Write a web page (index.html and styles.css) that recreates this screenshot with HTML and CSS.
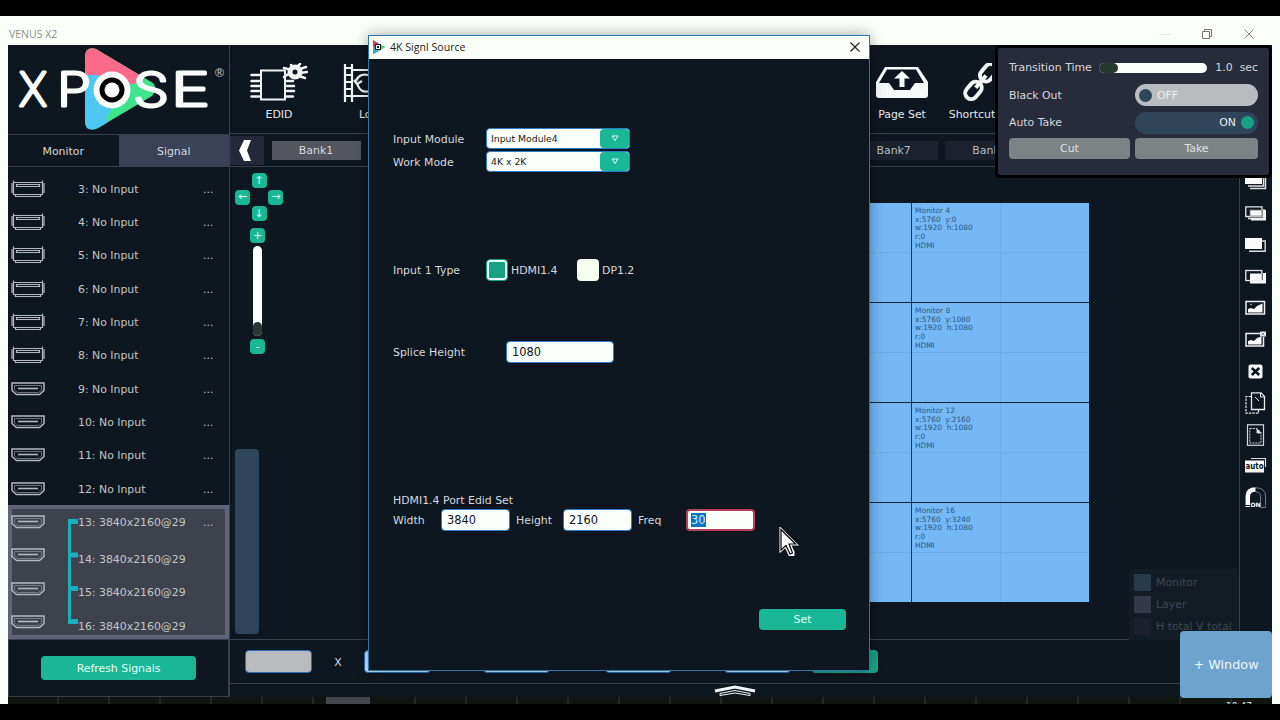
FILE: index.html
```html
<!DOCTYPE html>
<html lang="en">
<head>
  <meta charset="UTF-8">
  <meta name="viewport" content="width=device-width, initial-scale=1.0">
  <title>VENUS X2</title>
  <link rel="stylesheet" href="styles.css">
</head>
<body>
  <!-- Shared icons -->
  <svg class="defs" width="0" height="0">
    <symbol id="dvi" viewBox="0 0 34 18">
      <g fill="none" stroke="#b4b8c0" stroke-width="1.200">
        <path d="M2.500 .5V14.500H31.500V.5M2.500 2.500H31.500M5.500 4.500H28.500V6.500H5.500ZM4.500 14.500V16.500H29.500V14.500M1 3V13M33 3V13"/>
      </g>
    </symbol>
    <symbol id="hdmi" viewBox="0 0 34 14">
      <path d="M1 1H33V8.500L28.500 12.500H5.500L1 8.500Z" fill="none" stroke="#b4b8c0" stroke-width="1.500"/>
      <path d="M3.500 3.500H30.500V8L27.500 10.500H6.500L3.500 8Z" fill="none" stroke="#858a94" stroke-width=".8"/>
      <path d="M7 6.500H27" stroke="#b4b8c0" stroke-width="1.600"/>
    </symbol>
  </svg>

  <div class="screen">
    <div class="titlebar">
      <span class="app-name">VENUS X2</span>
      <div class="win-buttons">
        <svg width="12" height="12"><path d="M0 6.500H12" stroke="#e3e6e3"/></svg>
        <svg width="12" height="12" fill="none" stroke="#777"><path d="M1.500 3.500H8.500V10.500H1.500ZM3.500 3.500V1.500H10.500V8.500H8.500"/></svg>
        <svg width="12" height="12" stroke="#888"><path d="M1.500 1.500L10.500 10.500M10.500 1.500L1.500 10.500"/></svg>
      </div>
    </div>

    <div class="app">
      <!-- Left column -->
      <div class="sidebar">
        <div class="logo">
          <svg width="221" height="88" viewBox="8 46 221 88">
            <defs>
              <clipPath id="tri"><path d="M85 56Q86 46 96 49L153 83Q158 89 152 96L98 128Q86 133 85 122Z"/></clipPath>
            </defs>
            <g clip-path="url(#tri)">
              <rect x="80" y="44" width="80" height="90" fill="#3fe58c"/>
              <path d="M80 40H165L140 82L112 89L84 75H80Z" fill="#fc6a8b"/>
              <path d="M80 75H98L112 90V108L106 118L112 134H80Z" fill="#4cc8f3"/>
            </g>
            <g class="wordmark">
              <text x="19" y="105.500" textLength="28" lengthAdjust="spacingAndGlyphs">X</text>
              <text x="57" y="105.500" textLength="34" lengthAdjust="spacingAndGlyphs">P</text>
              <text x="133" y="105.500" textLength="36" lengthAdjust="spacingAndGlyphs">S</text>
              <text x="171" y="105.500" textLength="39" lengthAdjust="spacingAndGlyphs">E</text>
            </g>
            <circle cx="112" cy="90" r="18.500" fill="#fafcfa"/>
            <circle cx="112" cy="90" r="10" fill="none" stroke="#000" stroke-width="5"/>
            <text class="reg" x="213.500" y="77">®</text>
          </svg>
        </div>
        <div class="tabs">
          <div class="tab">Monitor</div>
          <div class="tab active">Signal</div>
        </div>
        <div class="signals">
          <div class="signal"><svg class="port dvi"><use href="#dvi"/></svg><span>3: No Input</span><b>...</b></div>
          <div class="signal"><svg class="port dvi"><use href="#dvi"/></svg><span>4: No Input</span><b>...</b></div>
          <div class="signal"><svg class="port dvi"><use href="#dvi"/></svg><span>5: No Input</span><b>...</b></div>
          <div class="signal"><svg class="port dvi"><use href="#dvi"/></svg><span>6: No Input</span><b>...</b></div>
          <div class="signal"><svg class="port dvi"><use href="#dvi"/></svg><span>7: No Input</span><b>...</b></div>
          <div class="signal"><svg class="port dvi"><use href="#dvi"/></svg><span>8: No Input</span><b>...</b></div>
          <div class="signal"><svg class="port"><use href="#hdmi"/></svg><span>9: No Input</span><b>...</b></div>
          <div class="signal"><svg class="port"><use href="#hdmi"/></svg><span>10: No Input</span><b>...</b></div>
          <div class="signal"><svg class="port"><use href="#hdmi"/></svg><span>11: No Input</span><b>...</b></div>
          <div class="signal"><svg class="port"><use href="#hdmi"/></svg><span>12: No Input</span><b>...</b></div>
        </div>
        <div class="group">
          <div class="group-ports">
            <svg class="port"><use href="#hdmi"/></svg>
            <svg class="port"><use href="#hdmi"/></svg>
            <svg class="port"><use href="#hdmi"/></svg>
            <svg class="port"><use href="#hdmi"/></svg>
          </div>
          <svg class="bracket" width="10" height="106" fill="#18b0c0"><path d="M0 0H10V5H3V33.500H10V38.500H3V67H10V72H3V100H10V105H0Z"/></svg>
          <div class="group-names">
            <span>13: 3840x2160@29</span>
            <span>14: 3840x2160@29</span>
            <span>15: 3840x2160@29</span>
            <span>16: 3840x2160@29</span>
          </div>
          <b>...</b>
        </div>
        <div class="refresh"><button class="green">Refresh Signals</button></div>
      </div>

      <!-- Main column -->
      <div class="main">
        <div class="toolbar">
          <div class="tool edid">
            <svg width="58" height="40" viewBox="0 0 58 40">
              <g fill="none" stroke="#f2f4f4" stroke-width="2.500" stroke-linecap="round">
                <rect x="11" y="7.500" width="24" height="29" stroke-width="2"/>
                <path d="M1.500 12H9M1.500 18H9M1.500 23H9M1.500 28H9M1.500 33.500H9M37 18H43M37 23H44M37 28H44M37 33.500H43"/>
                <circle cx="45" cy="9" r="5" stroke-width="5"/>
                <path d="M34 5L41 7M34 14L40 10M50 6L56 4M50 10L57 9M49 13L55 15M42 3L41 2M48 3L50 1" stroke-width="2.500"/>
              </g>
            </svg>
            <span>EDID</span>
          </div>
          <div class="tool load">
            <svg width="58" height="40" viewBox="0 0 58 40" fill="none" stroke="#f2f4f4" stroke-width="2.200">
              <path d="M2 1V39M9 1V39M2 5H9M2 12H9M2 19H9M2 26H9M2 33H9M9 7H48M9 33H48M13 18Q16 10 25 12M14 20Q17 31 27 28M11 17L14 21L19 18"/>
            </svg>
            <span>Load</span>
          </div>
          <div class="tool page-set">
            <svg width="54" height="40" viewBox="0 0 54 40">
              <path d="M10 4H43L53 19V32Q53 35 50 35H4Q1 35 1 32V19Z" fill="#f8faf9"/>
              <path d="M12 6.500H41L49 20H40L35 27H19L14 20H4Z" fill="#0e1620"/>
              <path d="M27 8L35 15.500H29.500V24H24.500V15.500H19Z" fill="#f8faf9"/>
            </svg>
            <span>Page Set</span>
          </div>
          <div class="tool shortcut">
            <svg width="40" height="40" viewBox="0 0 40 40" fill="none" stroke="#f2f4f4" stroke-width="4">
              <g transform="translate(9 0) rotate(-50 20 20)">
                <rect x="0" y="13" width="19" height="12" rx="6"/>
                <rect x="23" y="13" width="19" height="12" rx="6"/>
                <path d="M13 19H29"/>
              </g>
            </svg>
            <span>Shortcut</span>
          </div>
        </div>

        <div class="banks">
          <div class="bank-prev"><svg width="12" height="21"><path d="M5 0H12L8 10.500L12 21H5L0 10.500Z" fill="#fff"/></svg></div>
          <div class="bank active">Bank1</div>
          <div class="bank bank7">Bank7</div>
          <div class="bank">Bank8</div>
        </div>

        <div class="work">
          <div class="nav">
            <div class="pad">
              <i class="key up">↑</i>
              <i class="key left">←</i>
              <i class="key right">→</i>
              <i class="key down">↓</i>
            </div>
            <div class="zoom">
              <i class="key">+</i>
              <div class="zoom-track"><div class="zoom-thumb"></div></div>
              <i class="key">-</i>
            </div>
            <div class="scroll"></div>
          </div>

          <div class="stage">
            <div class="mon"></div><div class="mon"></div><div class="mon"></div>
            <div class="mon">Monitor 4<br>x:5760&nbsp; y:0<br>w:1920&nbsp; h:1080<br>r:0<br>HDMI</div>
            <div class="mon"></div><div class="mon"></div><div class="mon"></div>
            <div class="mon">Monitor 8<br>x:5760&nbsp; y:1080<br>w:1920&nbsp; h:1080<br>r:0<br>HDMI</div>
            <div class="mon"></div><div class="mon"></div><div class="mon"></div>
            <div class="mon">Monitor 12<br>x:5760&nbsp; y:2160<br>w:1920&nbsp; h:1080<br>r:0<br>HDMI</div>
            <div class="mon"></div><div class="mon"></div><div class="mon"></div>
            <div class="mon">Monitor 16<br>x:5760&nbsp; y:3240<br>w:1920&nbsp; h:1080<br>r:0<br>HDMI</div>
          </div>

          <div class="tools">
            <!-- bring to front -->
            <svg viewBox="0 0 22 22"><path d="M5 17.500H20.500V6M3 15H18.500V5" fill="none" stroke="#ddd" stroke-width="1.500"/><rect x="0" y="3" width="17" height="10" fill="#fafafa"/></svg>
            <!-- send to back -->
            <svg viewBox="0 0 22 22"><path d="M18 7H21V17.500H6V15H18Z" fill="#fafafa"/><path d="M.8 3.800H17V13.500H.8ZM3 15.500H19V6" fill="none" stroke="#e8e8e8" stroke-width="1.300"/><rect x="5" y="7" width="12" height="6" fill="#fafafa" stroke="#777" stroke-width=".8"/></svg>
            <!-- forward -->
            <svg viewBox="0 0 22 22"><path d="M4 17.200H20.200V7H17" fill="none" stroke="#ddd" stroke-width="1.400"/><rect x="0" y="4" width="17" height="11" fill="#fafafa"/></svg>
            <!-- backward -->
            <svg viewBox="0 0 22 22"><path d="M18 7H21V17.500H5V14H18Z" fill="#fafafa"/><rect x=".8" y="4.500" width="16" height="10" fill="none" stroke="#e8e8e8" stroke-width="1.300"/><rect x="5" y="7.500" width="11" height="6.500" fill="#fafafa"/></svg>
            <!-- picture -->
            <svg viewBox="0 0 22 22"><rect x="1" y="4.500" width="18.500" height="12.500" fill="none" stroke="#f0f0f0" stroke-width="1.500"/><path d="M3 15.500V12L6 11L9 12L12 9L17.500 6.500V15.500Z" fill="#fafafa"/><circle cx="6" cy="7.500" r=".8" fill="#ccc"/></svg>
            <!-- picture, remove -->
            <svg viewBox="0 0 22 22"><path d="M15 4.500H1V17H18.500V8" fill="none" stroke="#f0f0f0" stroke-width="1.500"/><path d="M3 15.500V12L6 11L9 12L12 9L16.500 7.500V15.500Z" fill="#fafafa"/><rect x="15" y="2.500" width="6" height="5" fill="#f0f0f0"/><path d="M16.500 3.500L19.500 6.500M19.500 3.500L16.500 6.500" stroke="#777" stroke-width=".8"/></svg>
            <!-- delete -->
            <svg viewBox="0 0 22 22"><rect x="3.500" y="3.500" width="14" height="14" rx="2" fill="#fafafa"/><path d="M6.800 7L14.200 14M14.200 7L6.800 14" stroke="#0e1620" stroke-width="2.600"/></svg>
            <!-- copy -->
            <svg viewBox="0 0 22 22" fill="none" stroke="#e8e8e8"><path d="M6.500 .8H16L19.500 4.500V17.500H6.500Z" stroke-width="1.300"/><path d="M15.500 1V5H19.500M10 5L14 9" /><path d="M6 4.500H1V21.200H13.500V18" stroke-dasharray="2.500 1" stroke-width="1.200"/></svg>
            <!-- page -->
            <svg viewBox="0 0 22 22" fill="none" stroke="#d8d8d8"><rect x="2.500" y=".8" width="16" height="20.500" stroke-width="1.200"/><path d="M4.800 4.500H12L16 8.500V19H4.800Z" stroke-dasharray="2 1"/><path d="M12 5V9H16Z" fill="#d8d8d8"/></svg>
            <!-- auto -->
            <svg viewBox="0 0 22 22"><path d="M6 3.500H20.500V12" fill="none" stroke="#ddd" stroke-width="1.200"/><rect x="0" y="5.500" width="19" height="12" fill="#fafafa"/><text x="9.500" y="14" class="auto-text" textLength="18" lengthAdjust="spacingAndGlyphs">auto</text></svg>
            <!-- magnet -->
            <svg viewBox="0 0 22 22"><path d="M2.800 20V9Q3 2.500 10.500 2.500" fill="none" stroke="#fafafa" stroke-width="4.500"/><path d="M11 .8Q20.500 1 20.500 9V20.500H15.500V9Q15.500 5 11 5" fill="none" stroke="#778" stroke-width="1"/><path d="M0 18.500H5M16 18.500H21" stroke="#222"/><text x="10.500" y="19.500" class="on-text">ON</text></svg>
          </div>
        </div>

        <div class="bottom">
          <div class="field dim"></div>
          <span class="times">X</span>
          <div class="field"></div>
          <div class="field second"></div>
          <div class="field third"></div>
          <div class="field fourth"></div>
          <div class="apply"></div>
        </div>
        <div class="drawer">
          <svg width="42" height="12" fill="none" stroke="#f4f6f6"><path d="M1 6L21 2L41 6" stroke-width="3"/><path d="M6 8.500L21 5.500L36 8.500V10.500L21 8L6 10.500Z"/></svg>
        </div>
      </div>

      <div class="taskbar"><div class="task"></div><span class="clock">10:47</span></div>

      <!-- Legend over the canvas -->
      <div class="legend">
        <div><i class="c-monitor"></i>Monitor</div>
        <div><i class="c-layer"></i>Layer</div>
        <div><i class="c-total"></i>H total V total</div>
      </div>

      <!-- Take panel -->
      <div class="panel">
        <div class="panel-row">
          <span>Transition Time</span>
          <div class="time-track"><div class="time-thumb"></div></div>
          <span>1.0</span><span class="sec">sec</span>
        </div>
        <div class="panel-row">
          <span>Black Out</span>
          <div class="toggle"><i></i>OFF</div>
        </div>
        <div class="panel-row">
          <span>Auto Take</span>
          <div class="toggle on">ON<i></i></div>
        </div>
        <div class="panel-buttons"><button>Cut</button><button>Take</button></div>
      </div>

      <div class="add-window">+ Window</div>
    </div>
  </div>

  <!-- Signal source dialog -->
  <div class="dialog">
    <div class="dialog-title">
      <svg width="14" height="16">
        <path d="M1 1L7 4.500L4 8L1 8Z" fill="#d63a68"/><path d="M1 8H5L7 12L1 15.500Z" fill="#43a5dc"/><path d="M6 4L13.500 8L6 12.500Z" fill="#4fd67c"/>
        <rect x="3.500" y="5.500" width="5" height="5" fill="#fff" stroke="#222"/><rect x="5" y="7" width="2" height="2" fill="#222"/>
      </svg>
      <span>4K Signl Source</span>
      <svg class="close" width="12" height="12" stroke="#222" stroke-width="1.200"><path d="M1.500 1.500L10.500 10.500M10.500 1.500L1.500 10.500"/></svg>
    </div>
    <div class="dialog-body">
      <div class="form-row">
        <label>Input Module</label>
        <div class="select"><span>Input Module4</span><i><svg width="8" height="7"><path d="M1 1H7L4 5.500Z" fill="none" stroke="#e6fff6"/></svg></i></div>
      </div>
      <div class="form-row">
        <label>Work Mode</label>
        <div class="select"><span>4K x 2K</span><i><svg width="8" height="7"><path d="M1 1H7L4 5.500Z" fill="none" stroke="#e6fff6"/></svg></i></div>
      </div>
      <div class="form-row type-row">
        <label>Input 1 Type</label>
        <div class="check checked"></div><span class="hdmi-label">HDMI1.4</span>
        <div class="check"></div><span>DP1.2</span>
      </div>
      <div class="form-row splice-row">
        <label>Splice Height</label>
        <div class="input wide">1080</div>
      </div>
      <div class="edid-title">HDMI1.4 Port Edid Set</div>
      <div class="form-row edid-row">
        <label>Width</label><div class="input">3840</div>
        <label>Height</label><div class="input">2160</div>
        <label class="freq">Freq</label><div class="input focus"><mark>30</mark></div>
      </div>
      <button class="green set">Set</button>
    </div>
  </div>

  <svg class="cursor" width="20" height="30"><path d="M1.500 1.500V24L6.500 19.500L10.500 28H14.500V25L11 17.500H17.500Z" fill="#fff" stroke="#fff" stroke-width="2"/><path d="M2 2.500V23L7 18.500L11 27L13.500 26L10 17H16.500Z" fill="#fff" stroke="#000" stroke-width="1.200"/></svg>
</body>
</html>
```

FILE: styles.css
```css
/* General Styles */
* {
  box-sizing: border-box;
}

body {
  font-family: 'DejaVu Sans', sans-serif;
  font-size: 10.9px;
  background-color: #000;
  color: #d6d9dc;
  margin: 0;
  width: 1280px;
  height: 720px;
  overflow: hidden;
}

i {
  font-style: normal;
}

svg {
  display: block;
  flex: none;
}

.defs {
  position: absolute;
}

button {
  font: inherit;
  border: none;
  padding: 0;
}

.green {
  background: #19b796;
  color: #e4fff7;
  border-radius: 4px;
}

.screen {
  margin-top: 16px;
  height: 688px;
  background: #fafffa;
  overflow: hidden;
}

.titlebar {
  height: 29px;
  padding: 6px 25px 0 9px;
  display: flex;
  justify-content: space-between;
  align-items: center;
}

.app-name {
  font-family: 'Open Sans', sans-serif;
  font-size: 10.5px;
  color: #8a8d8a;
}

.win-buttons {
  display: flex;
  gap: 30px;
}

.app {
  position: relative;
  margin: 0 8px;
  height: 659px;
  background: #0e1620;
  display: grid;
  grid-template-columns: 222px 1fr;
  grid-template-rows: 652px 7px;
}

/* Left column */
.sidebar {
  border-right: 1px solid #3b414c;
}

.logo {
  height: 89px;
  padding-top: 1px;
}

.wordmark text {
  font-family: Inter, sans-serif;
  font-size: 46px;
  font-weight: 200;
  fill: #fafcfa;
  stroke: #fafcfa;
  stroke-width: 3px;
  stroke-linejoin: round;
}

.reg {
  font-size: 12px;
  fill: #c0c4c8;
}

.tabs {
  display: flex;
  height: 33px;
  border-top: 1px solid #3b414c;
  border-bottom: 1px solid #3b414c;
}

.tab {
  flex: 1;
  display: flex;
  align-items: center;
  justify-content: center;
  padding-top: 1px;
}

.tab.active {
  background: #3b4258;
}

.signals {
  padding-top: 5px;
  height: 338px;
}

.signal {
  display: flex;
  align-items: center;
  height: 33.35px;
  padding-left: 3px;
  color: #c3c6c4;
}

.port {
  width: 34px;
  height: 14px;
}

.port.dvi {
  height: 18px;
}

.signal span {
  width: 125px;
  margin-left: 33px;
}

.signal span,
.signal b {
  padding-top: 1px;
}

b {
  font-weight: normal;
}

.group {
  display: flex;
  height: 134px;
  border: 4px solid #5f6478;
  background: #3e424d;
  color: #c3c6c4;
}

.group-ports {
  display: flex;
  flex-direction: column;
  gap: 19.4px;
  padding-top: 6px;
  margin-left: -1px;
}

.bracket {
  margin: 10px 0 0 23px;
}

.group-names {
  display: flex;
  flex-direction: column;
  justify-content: space-between;
  width: 125px;
  height: 125px;
  padding-top: 7px;
  line-height: 14px;
}

.group-names span {
  height: 14px;
}

.group-names span:first-child {
  margin-bottom: 3px;
}

.group b {
  margin-top: 7px;
}

.refresh {
  height: 58px;
  border: 1px solid #3b414c;
  padding: 16px 32px;
}

.refresh button {
  width: 155px;
  height: 24px;
  padding-top: 1px;
}

/* Toolbar */
.toolbar {
  display: flex;
  height: 89px;
  border-bottom: 1px solid #3b414c;
  padding-top: 18px;
}

.tool {
  display: flex;
  flex: none;
  flex-direction: column;
  align-items: center;
  gap: 5px;
  width: 60px;
  color: #e6e8ea;
}

.tool span {
  height: 14px;
  line-height: 14px;
}

.edid {
  margin-left: 19px;
}

.load {
  margin-left: 33px;
}

.page-set {
  margin-left: 470px;
}

.shortcut {
  margin-left: 10px;
}

.banks {
  display: flex;
  align-items: center;
  height: 33px;
  border-bottom: 1px solid #3b414c;
}

.bank-prev {
  display: flex;
  align-items: center;
  justify-content: center;
  width: 34px;
  height: 29px;
  padding-right: 5px;
  background: #252839;
}

.bank {
  display: flex;
  align-items: center;
  justify-content: center;
  width: 89px;
  height: 19px;
  margin-left: 7.5px;
  padding-top: 1px;
  background: #1b212d;
  color: #b9bcc0;
}

.bank.active {
  background: #53565f;
  color: #d6d9dc;
}

.bank7 {
  margin-left: 488px;
  justify-content: flex-start;
  padding-left: 28px;
}

/* Work area */
.work {
  display: flex;
  height: 472px;
}

.nav {
  width: 147px;
  padding: 6px 0 0 5px;
}

.pad {
  display: grid;
  grid-template-columns: 15px 15px 15px;
  grid-template-areas: ". up ." "left . right" ". down .";
  gap: 1.7px;
}

.key {
  display: flex;
  align-items: center;
  justify-content: center;
  width: 15px;
  height: 15px;
  border-radius: 4px;
  background: #19b796;
  color: #d9fff3;
  font-size: 11px;
  line-height: 10px;
}

.up { grid-area: up; }
.left { grid-area: left; }
.right { grid-area: right; }
.down { grid-area: down; }

.zoom {
  display: flex;
  flex-direction: column;
  align-items: center;
  width: 15px;
  margin: 7px 0 0 15px;
}

.zoom-track {
  display: flex;
  align-items: flex-end;
  width: 9px;
  height: 90px;
  margin: 3px 0;
  border-radius: 5px;
  background: #fcfffc;
}

.zoom-thumb {
  width: 9px;
  height: 14px;
  border-radius: 5px;
  background: #26382f;
}

.scroll {
  width: 24px;
  height: 185px;
  margin-top: 95px;
  border-radius: 4px;
  background: #2f4559;
}

.stage {
  display: grid;
  grid-template-columns: repeat(4, 178px);
  grid-template-rows: repeat(4, 100px);
  width: 712px;
  height: 399px;
  margin-top: 36px;
  overflow: hidden;
}

.mon {
  padding: 4px 0 0 3px;
  border-left: 1px solid #12314d;
  border-bottom: 1px solid #12202f;
  background:
    linear-gradient(#69aee8, #69aee8) 50% 0 / 1px 100% no-repeat,
    linear-gradient(#69aee8, #69aee8) 0 50% / 100% 1px no-repeat,
    #74b9f6;
  color: #2b5580;
  font-size: 7.4px;
  line-height: 8.7px;
}

.tools {
  display: flex;
  flex-direction: column;
  gap: 9.6px;
  width: 33px;
  margin-left: auto;
  padding: 4px 0 0 5px;
  border-left: 1px solid #3b414c;
}

.tools svg {
  width: 22px;
  height: 22px;
}

.auto-text {
  font: bold 8px 'DejaVu Sans', sans-serif;
  text-anchor: middle;
  fill: #0e1620;
}

.on-text {
  font: bold 6px 'DejaVu Sans', sans-serif;
  text-anchor: middle;
  fill: #fff;
}

/* Bottom bar */
.bottom {
  display: flex;
  align-items: center;
  height: 45px;
  border-top: 1px solid #3b414c;
  border-bottom: 1px solid #3b414c;
  padding-left: 15px;
}

.field {
  width: 67px;
  height: 23px;
  border: 1px solid #2a6cb8;
  border-radius: 4px;
  background: #c8e4fa;
}

.field.dim {
  background: #b8babd;
}

.times {
  width: 52px;
  padding-top: 1px;
  text-align: center;
}

.second { margin-left: 52px; }
.third { margin-left: 55px; }
.fourth { margin-left: 52px; }

.apply {
  width: 66px;
  height: 23px;
  margin-left: 21px;
  border-radius: 4px;
  background: #19a58a;
}

.drawer {
  padding: 1px 0 0 484px;
}

.taskbar {
  grid-column: 1 / 3;
  display: flex;
  overflow: hidden;
  background: repeating-linear-gradient(90deg, #10150f 0 49px, #242824 49px 51px);
}

.task {
  width: 44px;
  margin-left: 318px;
  background: #43464a;
}

.clock {
  margin: 3px 0 0 856px;
  font-size: 9px;
  line-height: 12px;
  color: #e8e8e8;
}

.legend {
  position: absolute;
  left: 1121px;
  top: 524px;
  width: 109px;
  padding: 2px 5px;
  background: #131b24;
  color: #3f4750;
}

.legend div {
  display: flex;
  align-items: center;
  height: 22.3px;
  white-space: nowrap;
}

.legend i {
  width: 17px;
  height: 17px;
  margin-right: 5px;
}

.c-monitor { background: #263c4e; }
.c-layer { background: #343848; }
.c-total { background: #1c202c; }

/* Take panel */
.panel {
  position: absolute;
  left: 987px;
  top: 0;
  width: 277px;
  height: 133px;
  padding: 6px 11px 0;
  border: 3px solid #000;
  border-radius: 5px;
  background: #282b3a;
}

.panel-row {
  display: flex;
  align-items: center;
  height: 27.6px;
}

.time-track {
  width: 108px;
  height: 10px;
  margin: 0 8px 0 auto;
  border-radius: 5px;
  background: #fcfffc;
}

.time-thumb {
  width: 19px;
  height: 10px;
  border-radius: 5px;
  background: #26382f;
}

.sec {
  margin-left: 7px;
}

.toggle {
  display: flex;
  align-items: center;
  gap: 5px;
  width: 123px;
  height: 22px;
  margin-left: auto;
  padding: 0 4px;
  border-radius: 11px;
  background: #b9bdc0;
  color: #eceeef;
}

.toggle i {
  width: 13px;
  height: 13px;
  border-radius: 50%;
  background: #2f4559;
}

.toggle.on {
  justify-content: flex-end;
  background: #2f4559;
}

.toggle.on i {
  background: #19a184;
}

.panel-buttons {
  display: grid;
  grid-template-columns: 121px 123px;
  gap: 5px;
  margin-top: 1px;
}

.panel-buttons button {
  height: 21px;
  padding-top: 1px;
  border-radius: 4px;
  background: #7d8285;
  color: #dfe2e2;
}

.add-window {
  position: absolute;
  left: 1172px;
  top: 586px;
  width: 92px;
  height: 67px;
  border-radius: 4px;
  background: #6ea3cd;
  color: #eef6fc;
  font-size: 12.8px;
  line-height: 67px;
  text-align: center;
}

/* Dialog */
.dialog {
  position: absolute;
  left: 368px;
  top: 35px;
  width: 502px;
  height: 636px;
  border: 1px solid #2b78a8;
  background: #0e1620;
  box-shadow: 0 0 14px rgba(0, 0, 0, 0.35);
}

.dialog-title {
  display: flex;
  align-items: center;
  height: 23px;
  padding: 0 8px 2px 3px;
  background: #fafffa;
  color: #222;
  font-family: 'Open Sans', sans-serif;
  font-size: 10.6px;
}

.dialog-title span {
  margin-left: 4px;
}

.close {
  margin-left: auto;
}

.dialog-body {
  padding: 68px 23px 0 24px;
}

.form-row {
  display: flex;
  align-items: center;
  height: 23px;
}

.form-row label {
  width: 93px;
  padding-top: 1px;
}

.select {
  display: flex;
  width: 144px;
  height: 21px;
  border: 1px solid #2a7cc8;
  border-radius: 4px;
  background: #fafffa;
  color: #222;
  font-size: 9.3px;
  line-height: 20px;
}

.select span {
  flex: 1;
  padding-left: 4px;
}

.select i {
  display: flex;
  align-items: center;
  justify-content: center;
  width: 29px;
  border-radius: 4px;
  background: #19b796;
}

.type-row {
  margin-top: 85px;
}

.type-row span {
  padding-top: 1px;
}

.check {
  width: 22px;
  height: 22px;
  margin-right: 3px;
  border-radius: 4px;
  background: #f5fff0;
}

.check.checked {
  border: 1px solid #19a184;
  background: #19a184;
  box-shadow: inset 0 0 0 2px #e8fff8;
}

.hdmi-label {
  width: 66px;
}

.splice-row {
  margin-top: 59px;
}

.splice-row label {
  width: 113px;
  padding-top: 2px;
}

.input {
  width: 69px;
  height: 22px;
  padding-left: 5px;
  border: 1px solid #2a7cc8;
  border-radius: 4px;
  background: #fafffa;
  color: #111;
  font-size: 11.4px;
  line-height: 21px;
}

.input.wide {
  width: 108px;
}

.input.focus {
  border: 2px solid #b8405c;
  padding-left: 3px;
  line-height: 19px;
}

mark {
  background: #0a74c4;
  color: #d8ecff;
}

.edid-title {
  margin-top: 127px;
  height: 19px;
  line-height: 22px;
}

.edid-row {
  height: 22px;
}

.edid-row label {
  width: 48px;
}

.edid-row .input + label {
  width: 47px;
  margin-left: 6px;
}

.edid-row .input + label.freq {
  width: 48px;
}

.set {
  display: block;
  width: 87px;
  height: 21px;
  margin: 78px 0 0 auto;
}

.cursor {
  position: absolute;
  left: 779px;
  top: 527px;
}
```
